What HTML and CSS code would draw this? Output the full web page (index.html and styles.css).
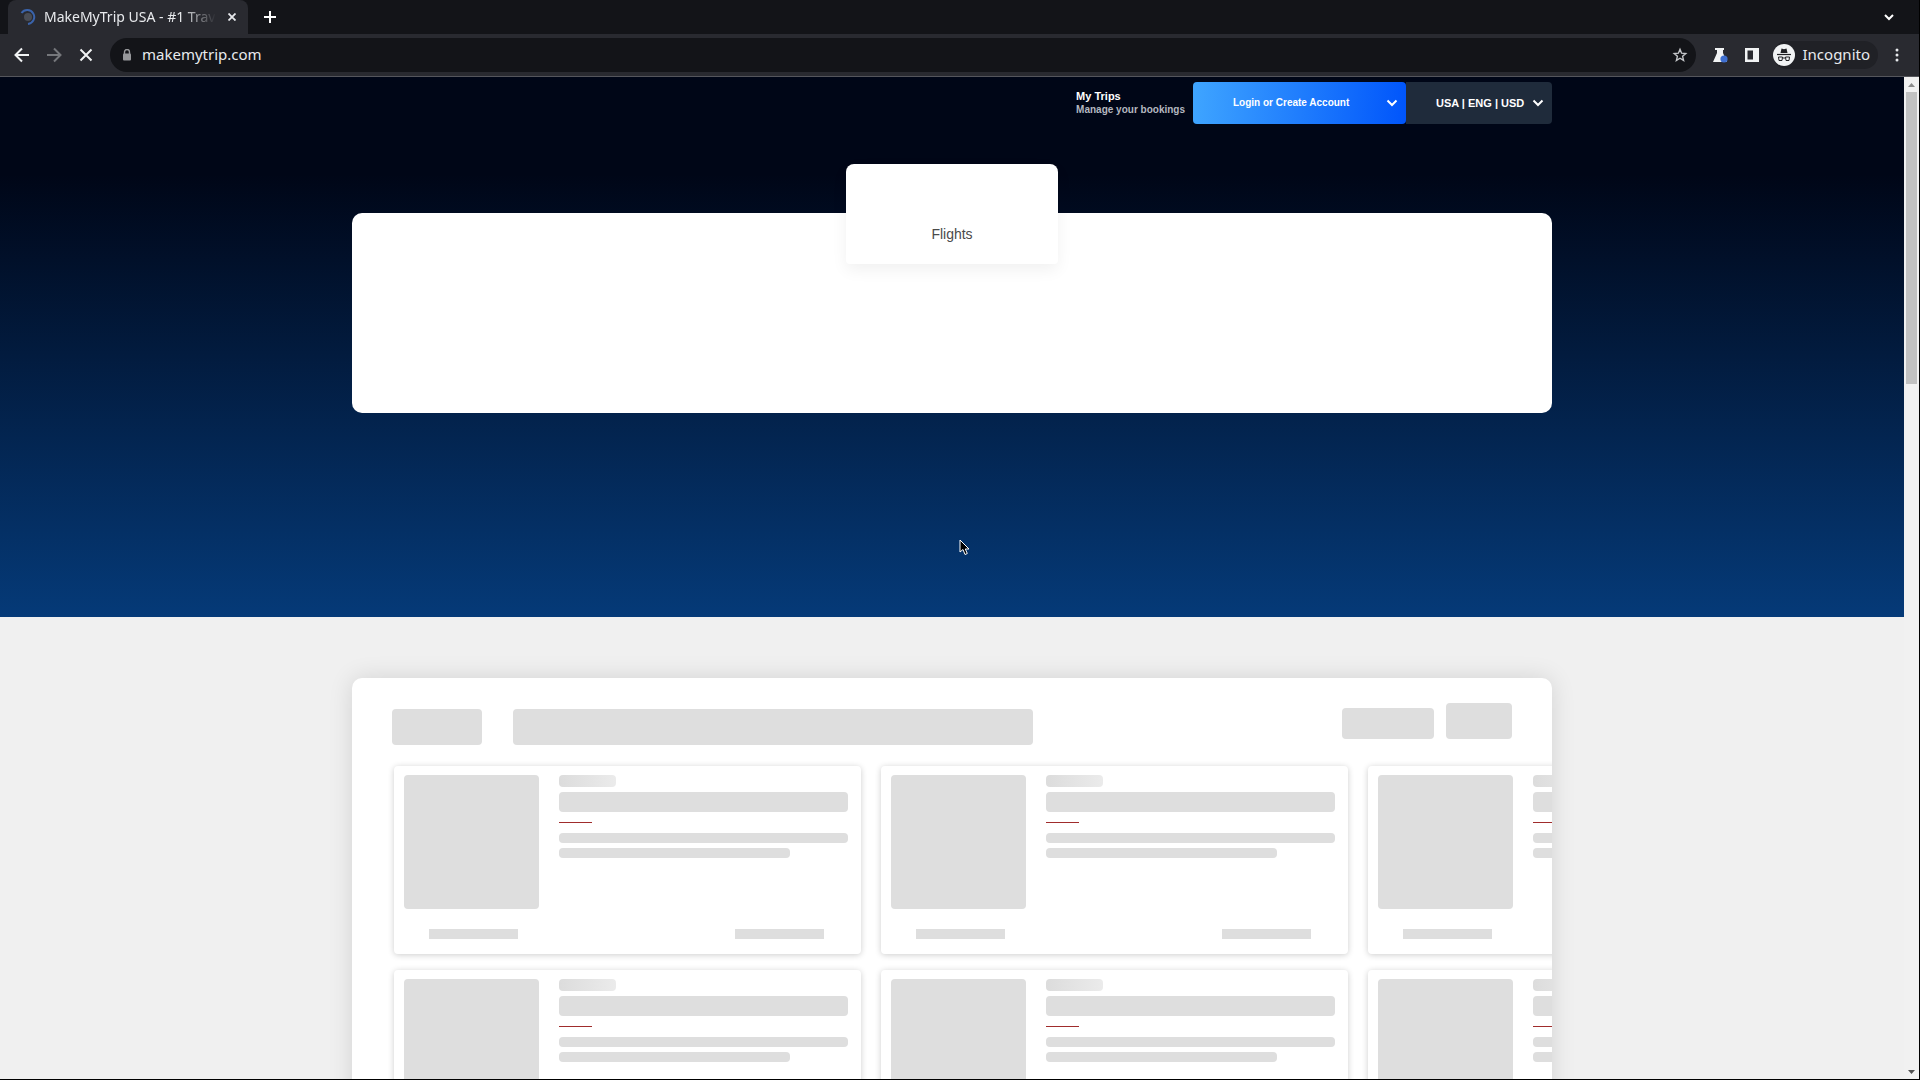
FILE: index.html
```html
<!DOCTYPE html>
<html lang="en">
<head>
    <meta charset="UTF-8">
    <meta name="viewport" content="width=device-width, initial-scale=1.0">
    <title>MakeMyTrip USA</title>
    <link rel="stylesheet" href="styles.css">
</head>
<body>
    <header class="browser">
        <div class="tab-strip">
            <div class="tab">
                <svg class="spinner" viewBox="0 0 16 16" width="16" height="16">
                    <circle cx="8" cy="8" r="4" fill="#4a4d55"/>
                    <path d="M1.5 4A7 7 0 1 1 8 15" fill="none" stroke="#3a63ab" stroke-width="2"/>
                </svg>
                <span class="tab-title">MakeMyTrip USA - #1 Trav</span>
                <button class="tab-close" aria-label="Close tab">
                    <svg viewBox="0 0 8 8" width="8" height="8"><path d="M0.5 0.5l7 7M7.5 0.5l-7 7" stroke="#e8eaed" stroke-width="1.8"/></svg>
                </button>
            </div>
            <button class="new-tab" aria-label="New tab">
                <svg viewBox="0 0 12 12" width="12" height="12"><path d="M6 0v12M0 6h12" stroke="#fff" stroke-width="2"/></svg>
            </button>
            <button class="tab-search" aria-label="Search tabs">
                <svg viewBox="0 0 10 7" width="10" height="7"><path d="M1 1l4 4 4-4" fill="none" stroke="#fff" stroke-width="2"/></svg>
            </button>
        </div>
        <div class="toolbar">
            <div class="nav-buttons">
                <button aria-label="Back">
                    <svg viewBox="0 0 16 16" width="16" height="16"><path d="M15 8H2M8 1.5L1.5 8 8 14.5" fill="none" stroke="#f1f3f4" stroke-width="2"/></svg>
                </button>
                <button aria-label="Forward">
                    <svg viewBox="0 0 16 16" width="16" height="16"><path d="M1 8h13M8 1.5L14.5 8 8 14.5" fill="none" stroke="#75777b" stroke-width="2"/></svg>
                </button>
                <button aria-label="Stop">
                    <svg viewBox="0 0 16 16" width="16" height="16"><path d="M2.5 2.5l11 11M13.5 2.5l-11 11" stroke="#f1f3f4" stroke-width="2"/></svg>
                </button>
            </div>
            <div class="address">
                <svg viewBox="0 0 10 12" width="10" height="12"><path d="M2.5 5V3a2.5 2.5 0 0 1 5 0v2" fill="none" stroke="#97989b" stroke-width="1.4"/><rect x="1" y="4.5" width="8" height="7" rx="1" fill="#97989b"/></svg>
                <input class="url" type="text" value="makemytrip.com" aria-label="Address">
                <button aria-label="Bookmark">
                    <svg viewBox="0 0 16 16" width="16" height="16"><path d="M8 2.3l1.6 3.9 4.2.3-3.2 2.8 1 4.1L8 11.2l-3.6 2.2 1-4.1-3.2-2.8 4.2-.3z" fill="none" stroke="#c4c6c9" stroke-width="1.4"/></svg>
                </button>
            </div>
            <button aria-label="Labs">
                <svg viewBox="0 0 16 16" width="16" height="16"><path d="M3 1h9v2h-1v3l4 9H1l4-9V3H3z" fill="#f1f3f4"/><circle cx="12" cy="12" r="3.6" fill="#3f6fd0"/></svg>
            </button>
            <button class="panel-button" aria-label="Side panel">
                <svg viewBox="0 0 14 14" width="14" height="14"><path d="M0 0h14v14H0zM2.5 2.5v9H8v-9z" fill="#f1f3f4" fill-rule="evenodd"/></svg>
            </button>
            <button class="incognito">
                <svg viewBox="0 0 22 22" width="22" height="22">
                    <circle cx="11" cy="11" r="11" fill="#f1f3f4"/>
                    <path d="M7.5 9l1-4.5 2.5.7 2.5-.7 1 4.5z" fill="#202124"/>
                    <path d="M4 10.5h14" stroke="#202124" stroke-width="1.2"/>
                    <path d="M5.5 13h4l-.5 3.5H6zM12.5 13h4l-.5 3.5h-3zM9.5 14h3" fill="none" stroke="#202124"/>
                </svg>
                <span>Incognito</span>
            </button>
            <button aria-label="Menu">
                <svg viewBox="0 0 4 14" width="4" height="14"><g fill="#e8eaed"><circle cx="2" cy="2" r="1.5"/><circle cx="2" cy="7" r="1.5"/><circle cx="2" cy="12" r="1.5"/></g></svg>
            </button>
        </div>
    </header>

    <div class="viewport">
        <main class="page">
            <section class="hero">
                <div class="container">
                    <nav class="top-nav">
                        <a class="my-trips" href="#">
                            <strong>My Trips</strong>
                            <span>Manage your bookings</span>
                        </a>
                        <button class="login">
                            <span>Login or Create Account</span>
                            <svg viewBox="0 0 12 8" width="12" height="8"><path d="M1.5 1.5L6 6l4.5-4.5" fill="none" stroke="#fff" stroke-width="2"/></svg>
                        </button>
                        <button class="locale">
                            <span>USA | ENG | USD</span>
                            <svg viewBox="0 0 12 8" width="12" height="8"><path d="M1.5 1.5L6 6l4.5-4.5" fill="none" stroke="#fff" stroke-width="2"/></svg>
                        </button>
                    </nav>
                    <div class="search-card">
                        <a class="flights" href="#">Flights</a>
                    </div>
                </div>
                <svg class="cursor" viewBox="0 0 12 17" width="12" height="17"><path d="M1 1v12l3-2.5 2 5 2.3-1-2-4.5H10z" fill="#000" stroke="#fff"/></svg>
            </section>

            <section class="container offers">
                <div class="offers-head">
                    <div class="bone title"></div>
                    <div class="bone tabs"></div>
                    <div class="head-actions">
                        <div class="bone arrows"></div>
                        <div class="bone view-all"></div>
                    </div>
                </div>
                <div class="offers-grid" id="offersGrid">
                    <article class="offer">
                        <div class="bone thumb"></div>
                        <div class="lines">
                            <div class="bone tag"></div>
                            <div class="bone heading"></div>
                            <div class="rule"></div>
                            <div class="bone line"></div>
                            <div class="bone line short"></div>
                        </div>
                        <div class="offer-foot"><div class="bone"></div><div class="bone"></div></div>
                    </article>
                </div>
            </section>
        </main>
        <div class="scrollbar">
            <svg viewBox="0 0 14 15" width="14" height="15"><path d="M4 10l3.5-4 3.5 4z" fill="#8b8b8b"/></svg>
            <div class="track"><div class="thumb-bar"></div></div>
            <svg viewBox="0 0 14 15" width="14" height="15"><path d="M4 6l3.5 4L11 6z" fill="#505050"/></svg>
        </div>
    </div>

    <script>
        // Fill both rows with the same placeholder card
        const grid = document.getElementById('offersGrid');
        const card = grid.querySelector('.offer');
        for (let i = 1; i < 6; i++) {
            grid.appendChild(card.cloneNode(true));
        }
    </script>
</body>
</html>
```
FILE: styles.css
```css
* {
    box-sizing: border-box;
}
body {
    margin: 0;
    height: 100vh;
    padding: 0 1px 1px 0;
    display: flex;
    flex-direction: column;
    overflow: hidden;
    background: #000;
    font-family: "Liberation Sans", Arial, sans-serif;
}
button {
    display: flex;
    align-items: center;
    justify-content: center;
    padding: 0;
    border: none;
    background: none;
    color: inherit;
    font: inherit;
    cursor: pointer;
}
svg {
    display: block;
    flex: none;
}
a {
    color: inherit;
    text-decoration: none;
}

/* Browser window */
.browser {
    flex: none;
    color: #e8eaed;
    font-family: "Noto Sans", sans-serif;
    border-bottom: 1px solid #55565c;
}
.tab-strip {
    display: flex;
    align-items: center;
    height: 34px;
    padding: 0 22px 0 8px;
    background: #131418;
}
.tab {
    display: flex;
    align-items: center;
    gap: 8px;
    width: 240px;
    height: 34px;
    padding: 0 8px 0 12px;
    border-radius: 8px 8px 0 0;
    background: #292a30;
}
.tab-title {
    flex: 1;
    padding-bottom: 2px;
    white-space: nowrap;
    font-size: 14px;
    -webkit-mask-image: linear-gradient(90deg, #000 80%, transparent);
    mask-image: linear-gradient(90deg, #000 80%, transparent);
}
.tab-close {
    width: 16px;
    height: 16px;
}
.new-tab {
    width: 28px;
    height: 28px;
    margin-left: 8px;
}
.tab-search {
    width: 16px;
    height: 28px;
    margin-left: auto;
}
.toolbar {
    display: flex;
    align-items: center;
    height: 42px;
    padding: 0 20px 0 14px;
    background: #292a30;
}
.nav-buttons {
    display: flex;
    gap: 16px;
    margin-right: 16px;
}
.address {
    flex: 1;
    display: flex;
    align-items: center;
    height: 34px;
    margin-right: 16px;
    padding: 0 8px 0 12px;
    border-radius: 17px;
    background: #131418;
}
.url {
    flex: 1;
    min-width: 0;
    margin-left: 10px;
    padding: 0 0 2px;
    border: none;
    outline: none;
    background: none;
    color: #e8eaed;
    font: 15px "Noto Sans", sans-serif;
}
.panel-button {
    margin: 0 14px 0 17px;
}
.incognito {
    gap: 8px;
    height: 28px;
    margin-right: 17px;
    padding-right: 8px;
    border-radius: 14px;
    background: #202126;
    font-size: 15px;
}
.incognito span {
    padding-bottom: 2px;
}

/* Page */
.viewport {
    flex: 1;
    display: flex;
    min-height: 0;
}
.page {
    flex: 1;
    overflow: hidden;
    background: #f0f0f0;
}
.container {
    width: 100%;
    max-width: 1200px;
    margin: 0 auto;
}
.hero {
    position: relative;
    height: 540px;
    background: linear-gradient(#000617 0, #000617 18%, #053a78 100%);
}
.top-nav {
    display: flex;
    justify-content: flex-end;
    height: 47px;
    padding-top: 5px;
    color: #fff;
    font-weight: bold;
}
.my-trips {
    display: flex;
    flex-direction: column;
    margin: 7px 8px 0 0;
    font-size: 11px;
    line-height: 14px;
}
.my-trips span {
    color: #b4b8c0;
    font-size: 10px;
    line-height: 13px;
}
.login {
    width: 213px;
    padding: 0 8px 0 40px;
    justify-content: space-between;
    border-radius: 4px;
    background: linear-gradient(93deg, #3fa5ff, #0055fb);
    font-size: 10px;
}
.login span {
    padding-bottom: 2px;
}
.locale {
    width: 146px;
    padding: 0 8px 0 30px;
    justify-content: space-between;
    border-radius: 0 4px 4px 0;
    background: #1f2b3b;
    font-size: 11px;
}
.search-card {
    position: relative;
    height: 200px;
    margin-top: 89px;
    border-radius: 10px;
    background: #fff;
}
.flights {
    position: absolute;
    top: -49px;
    left: calc(50% - 106px);
    display: flex;
    align-items: flex-end;
    justify-content: center;
    width: 212px;
    height: 100px;
    padding-bottom: 22px;
    border-radius: 8px 8px 4px 4px;
    background: #fff;
    box-shadow: 0 6px 16px rgba(0, 0, 0, 0.06);
    color: #4a4a4a;
    font-size: 14px;
    line-height: 16px;
}
.cursor {
    position: absolute;
    left: calc(50% + 7px);
    top: 462px;
}

/* Offer placeholders */
.offers {
    margin-top: 61px;
    padding: 25px 0 40px 40px;
    overflow: hidden;
    border-radius: 10px;
    background: #fff;
    box-shadow: 0 0 24px rgba(0, 0, 0, 0.12);
}
.bone {
    border-radius: 4px;
    background: #dedede;
}
.offers-head {
    display: flex;
    align-items: flex-end;
    height: 42px;
    padding-right: 40px;
}
.title {
    width: 90px;
    height: 36px;
}
.tabs {
    width: 520px;
    height: 36px;
    margin-left: 31px;
}
.head-actions {
    display: flex;
    align-items: flex-end;
    align-self: flex-start;
    gap: 12px;
    margin-left: auto;
}
.arrows {
    width: 92px;
    height: 31px;
}
.view-all {
    width: 66px;
    height: 36px;
}
.offers-grid {
    display: grid;
    grid-template-columns: repeat(3, 467px);
    gap: 16px 20px;
    margin: 21px 0 0 2px;
}
.offer {
    display: grid;
    grid-template-columns: 135px 1fr;
    column-gap: 20px;
    align-content: start;
    height: 188px;
    padding: 9px 13px 0 10px;
    border-radius: 4px;
    background: #fff;
    box-shadow: 0 1px 6px rgba(0, 0, 0, 0.2);
}
.thumb {
    height: 134px;
}
.tag {
    width: 57px;
    height: 12px;
    margin-bottom: 5px;
    background: linear-gradient(90deg, #dcdcdc, #ebebeb);
}
.heading {
    height: 20px;
}
.rule {
    width: 33px;
    height: 1px;
    margin: 10px 0;
    background: #a02c2c;
}
.line {
    height: 10px;
    margin-bottom: 5px;
}
.short {
    width: 80%;
}
.offer-foot {
    grid-column: 1 / 3;
    display: flex;
    justify-content: space-between;
    padding: 20px 24px 0 25px;
}
.offer-foot .bone {
    width: 89px;
    height: 10px;
    border-radius: 0;
}

/* Scrollbar */
.scrollbar {
    display: flex;
    flex-direction: column;
    width: 15px;
    background: #f1f1f1;
}
.track {
    flex: 1;
    padding: 0 2px;
}
.thumb-bar {
    height: 30%;
    background: #c1c1c1;
}
```
